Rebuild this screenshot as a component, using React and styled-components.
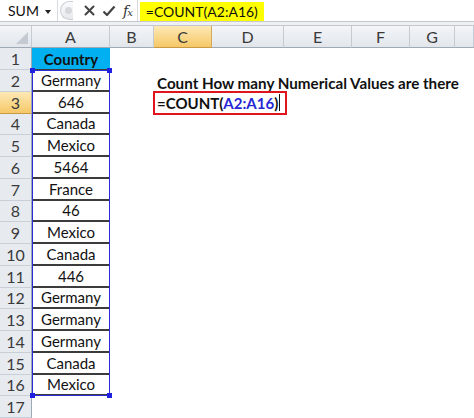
import React from "react";
import styled, { createGlobalStyle, css } from "styled-components";

const Global = createGlobalStyle`
  html, body { margin: 0; padding: 0; background: #fff; }
  body { width: 474px; height: 418px; overflow: hidden; font-family: Lato, "Open Sans", sans-serif; }
`;

const Page = styled.div`
  width: 474px;
  height: 418px;
  display: flex;
  flex-direction: column;
  background: #fff;
  overflow: hidden;
`;

const FormulaBar = styled.div`
  height: 22px;
  display: flex;
  align-items: stretch;
  border-bottom: 1px solid #c3c8cf;
  background: #fff;
`;

const NameBox = styled.div`
  width: 58px;
  display: flex;
  align-items: center;
  justify-content: space-between;
  padding: 0 6px 0 8px;
  box-sizing: border-box;
  font-size: 14px;
  color: #111;
  border-right: 1px solid #d6dade;
`;

const Caret = styled.span`
  width: 0;
  height: 0;
  border-left: 3px solid transparent;
  border-right: 3px solid transparent;
  border-top: 4px solid #222;
  margin-top: 2px;
`;

const Knob = styled.div`
  width: 12px;
  margin: 1px 0 1px 2px;
  border: 1px solid #c9ced4;
  border-right: none;
  border-radius: 11px 0 0 11px;
  background: linear-gradient(#fafbfc, #e6e9ed);
  display: flex;
  align-items: center;
  justify-content: center;
  &::after {
    content: "";
    width: 7px;
    height: 7px;
    border-radius: 50%;
    background: #d4d8dd;
    margin-left: 3px;
  }
`;

const Tools = styled.div`
  display: flex;
  align-items: center;
  gap: 7px;
  padding: 0 5px 0 11px;
  border-right: 1px solid #d6dade;
`;

const Fx = styled.span`
  font-family: "DejaVu Serif", "Liberation Serif", serif;
  font-style: italic;
  font-size: 14px;
  color: #333;
  letter-spacing: -1px;
  & small { font-size: 10px; }
`;

const FormulaInput = styled.div`
  margin: 2px 0 0 2px;
  width: 124px;
  background: #ffff00;
  display: flex;
  align-items: center;
  padding-left: 6px;
  box-sizing: border-box;
  font-size: 14px;
  color: #111;
`;

const Strip = styled.div`
  height: 3px;
  background: #eef0f3;
  border-bottom: 1px solid #c3c8cf;
`;

const Sheet = styled.div`
  position: relative;
  display: grid;
  grid-template-columns: 32px 78px 44px 58px 72px 68px 58px 45px 1fr;
  grid-template-rows: 22px repeat(17, 21.75px);
  flex: 1;
`;

const ColHead = styled.div`
  background: ${(p) => (p.$active ? "linear-gradient(#fde9b6, #f6c867)" : "linear-gradient(#f3f5f8, #e2e6eb)")};
  border-right: 1px solid ${(p) => (p.$active ? "#d2a95a" : "#c5cbd3")};
  border-bottom: 1px solid ${(p) => (p.$active ? "#c79a46" : "#9ea9b6")};
  box-sizing: border-box;
  display: flex;
  align-items: center;
  justify-content: center;
  font-size: 16px;
  color: #3a3a3a;
`;

const Corner = styled(ColHead)`
  position: relative;
  &::after {
    content: "";
    position: absolute;
    right: 3px;
    bottom: 3px;
    width: 0;
    height: 0;
    border-left: 12px solid transparent;
    border-bottom: 12px solid #c4cad2;
  }
`;

const RowHead = styled.div`
  background: ${(p) => (p.$active ? "linear-gradient(#fde9b6, #f6c867)" : "#e7ebf0")};
  border-right: 1px solid #9ea9b6;
  border-bottom: 1px solid ${(p) => (p.$active ? "#c79a46" : "#c9cfd7")};
  box-sizing: border-box;
  display: flex;
  align-items: center;
  justify-content: center;
  font-size: 16px;
  color: #3a3a3a;
`;

const Cell = styled.div`
  position: relative;
  box-sizing: border-box;
  display: flex;
  align-items: center;
  white-space: nowrap;
  font-size: 15px;
  color: #111;
  ${(p) =>
    p.$data &&
    css`
      justify-content: center;
      border-bottom: 2px solid #3c3c3c;
    `}
  ${(p) =>
    p.$header &&
    css`
      background: #00b0f0;
      font-weight: 700;
      border-bottom: 1px solid #3c3c3c;
    `}
`;

const Note = styled.span`
  position: absolute;
  left: 3px;
  top: 4px;
  font-weight: 700;
  font-size: 15.2px;
  color: #111;
`;

const EditBox = styled.div`
  position: absolute;
  left: -1px;
  top: -1px;
  width: 134px;
  height: 24px;
  border: 2px solid #e0141e;
  box-sizing: border-box;
  display: flex;
  align-items: center;
  padding-left: 2px;
  font-weight: 700;
  font-size: 15px;
  color: #111;
`;

const Ref = styled.span`
  color: #2727d6;
`;

const Cursor = styled.span`
  display: inline-block;
  width: 1px;
  height: 17px;
  background: #111;
  margin-left: 1px;
`;

const Selection = styled.div`
  position: absolute;
  left: 32px;
  top: ${22 + 21.75}px;
  width: 78px;
  height: ${21.75 * 15}px;
  border: 1px solid #2b2bd8;
  box-sizing: border-box;
  pointer-events: none;
`;

const Handle = styled.span`
  position: absolute;
  width: 5px;
  height: 5px;
  background: #2020e0;
  ${(p) => (p.$top ? "top: -3px;" : "bottom: -3px;")}
  ${(p) => (p.$left ? "left: -3px;" : "right: -3px;")}
`;

const columns = ["A", "B", "C", "D", "E", "F", "G", ""];
const values = [
  "Country", "Germany", "646", "Canada", "Mexico", "5464", "France", "46",
  "Mexico", "Canada", "446", "Germany", "Germany", "Germany", "Canada", "Mexico", "",
];

const XIcon = () => (
  <svg width="11" height="11" viewBox="0 0 11 11">
    <path d="M1.5 1.5 L9.5 9.5 M9.5 1.5 L1.5 9.5" stroke="#444" strokeWidth="2" strokeLinecap="round" />
  </svg>
);

const CheckIcon = () => (
  <svg width="14" height="12" viewBox="0 0 14 12">
    <path d="M1.5 6.5 L5 10 L12.5 1.5" stroke="#444" strokeWidth="2.2" fill="none" strokeLinejoin="round" />
  </svg>
);

export default function App() {
  return (
    <Page>
      <Global />
      <FormulaBar>
        <NameBox>
          SUM
          <Caret />
        </NameBox>
        <Knob />
        <Tools>
          <XIcon />
          <CheckIcon />
          <Fx>
            f<small>x</small>
          </Fx>
        </Tools>
        <FormulaInput>=COUNT(A2:A16)</FormulaInput>
      </FormulaBar>
      <Strip />
      <Sheet>
        <Corner />
        {columns.map((c, i) => (
          <ColHead key={i} $active={c === "C"}>
            {c}
          </ColHead>
        ))}
        {values.map((v, r) => (
          <React.Fragment key={r}>
            <RowHead $active={r === 2}>{r + 1}</RowHead>
            <Cell $data={r < 16} $header={r === 0}>
              {v}
            </Cell>
            <Cell />
            <Cell>
              {r === 1 && <Note>Count How many Numerical Values are there</Note>}
              {r === 2 && (
                <EditBox>
                  =COUNT(<Ref>A2:A16</Ref>)<Cursor />
                </EditBox>
              )}
            </Cell>
            <Cell />
            <Cell />
            <Cell />
            <Cell />
            <Cell />
          </React.Fragment>
        ))}
        <Selection>
          <Handle $top $left />
          <Handle $top />
          <Handle $left />
          <Handle />
        </Selection>
      </Sheet>
    </Page>
  );
}
